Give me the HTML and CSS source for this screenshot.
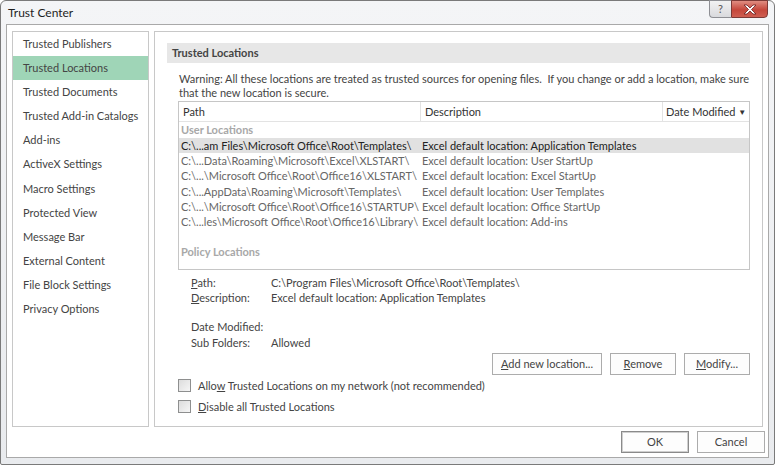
FILE: index.html
```html
<!DOCTYPE html>
<html lang="en">
<head>
    <meta charset="UTF-8">
    <title>Trust Center</title>
<link rel="stylesheet" href="styles.css">
</head>
<body>
    <div class="window">
        <div class="titlebar">
            <div class="title">Trust Center</div>
            <div class="caption">
                <div class="help">?</div>
                <div class="close">
                    <svg width="14" height="11" viewBox="0 0 14 11">
                        <path d="M1 1h3l3 3 3-3h3l-4.5 4.5L13 10h-3L7 7l-3 3H1l4.5-4.5z" fill="#fff" stroke="#6b1f1f" stroke-width="0.8"/>
                    </svg>
                </div>
            </div>
        </div>

        <div class="client">
            <div class="content">
                <div class="nav">
                    <div class="item">Trusted Publishers</div>
                    <div class="item active">Trusted Locations</div>
                    <div class="item">Trusted Documents</div>
                    <div class="item">Trusted Add-in Catalogs</div>
                    <div class="item">Add-ins</div>
                    <div class="item">ActiveX Settings</div>
                    <div class="item">Macro Settings</div>
                    <div class="item">Protected View</div>
                    <div class="item">Message Bar</div>
                    <div class="item">External Content</div>
                    <div class="item">File Block Settings</div>
                    <div class="item">Privacy Options</div>
                </div>

                <div class="panel">
                    <div class="heading">Trusted Locations</div>
                    <div class="warning">Warning: All these locations are treated as trusted sources for opening files.&nbsp; If you change or add a location, make sure that the new location is secure.</div>

                    <div class="list">
                        <div class="head">
                            <div class="col path">Path</div>
                            <div class="col desc">Description</div>
                            <div class="col date">Date Modified <span class="arrow">&#9660;</span></div>
                        </div>
                        <div class="group">User Locations</div>
                        <div class="row selected">
                            <div class="path">C:\...am Files\Microsoft Office\Root\Templates\</div>
                            <div class="desc">Excel default location: Application Templates</div>
                        </div>
                        <div class="row">
                            <div class="path">C:\...Data\Roaming\Microsoft\Excel\XLSTART\</div>
                            <div class="desc">Excel default location: User StartUp</div>
                        </div>
                        <div class="row">
                            <div class="path">C:\...\Microsoft Office\Root\Office16\XLSTART\</div>
                            <div class="desc">Excel default location: Excel StartUp</div>
                        </div>
                        <div class="row">
                            <div class="path">C:\...AppData\Roaming\Microsoft\Templates\</div>
                            <div class="desc">Excel default location: User Templates</div>
                        </div>
                        <div class="row">
                            <div class="path">C:\...\Microsoft Office\Root\Office16\STARTUP\</div>
                            <div class="desc">Excel default location: Office StartUp</div>
                        </div>
                        <div class="row">
                            <div class="path">C:\...les\Microsoft Office\Root\Office16\Library\</div>
                            <div class="desc">Excel default location: Add-ins</div>
                        </div>
                        <div class="group policy">Policy Locations</div>
                    </div>

                    <div class="details">
                        <div class="label"><u>P</u>ath:</div>
                        <div>C:\Program Files\Microsoft Office\Root\Templates\</div>
                        <div class="label"><u>D</u>escription:</div>
                        <div>Excel default location: Application Templates</div>
                        <div class="label blank">&nbsp;</div>
                        <div class="blank"></div>
                        <div class="label">Date Modified:</div>
                        <div></div>
                        <div class="label last">Sub Folders:</div>
                        <div class="last">Allowed</div>
                    </div>

                    <div class="actions">
                        <a href="#" class="btn wide"><u>A</u>dd new location...</a>
                        <a href="#" class="btn"><u>R</u>emove</a>
                        <a href="#" class="btn"><u>M</u>odify...</a>
                    </div>

                    <label class="check"><span class="box"></span><span>Allo<u>w</u> Trusted Locations on my network (not recommended)</span></label>
                    <label class="check"><span class="box"></span><span><u>D</u>isable all Trusted Locations</span></label>
                </div>
            </div>

            <div class="footer">
                <a href="#" class="btn default">OK</a>
                <a href="#" class="btn">Cancel</a>
            </div>
        </div>
    </div>
</body>
</html>
```

FILE: styles.css
```css
body {
margin: 0;
background: #fff;
font-family: Lato, "Open Sans", sans-serif;
font-size: 11px;
color: #444;
}

.window {
width: 775px;
height: 465px;
box-sizing: border-box;
border: solid 1px #7a7a7a;
border-radius: 6px 6px 2px 2px;
background: linear-gradient(#f4f5f7, #e9ebee);
display: flex;
flex-direction: column;
}

.titlebar {
height: 23px;
flex-shrink: 0;
display: flex;
justify-content: space-between;
}

.title {
padding: 4px 0 0 7px;
font-size: 12px;
color: #1e1e1e;
}

.caption {
display: flex;
margin-right: 6px;
margin-top: -1px;
}

.help {
width: 22px;
height: 18px;
box-sizing: border-box;
border: solid 1px #8e8f94;
border-right: none;
border-radius: 0 0 0 4px;
background: linear-gradient(#f2f2f2, #d9dadd);
text-align: center;
font-size: 11px;
line-height: 16px;
color: #555;
}

.close {
width: 37px;
height: 18px;
box-sizing: border-box;
border: solid 1px #7d3a36;
border-radius: 0 0 4px 0;
background: linear-gradient(#e08d81, #c5473b 55%, #cf5f52);
display: flex;
justify-content: center;
align-items: center;
}

.client {
flex: 1;
margin: 0 5px 6px 5px;
border: solid 1px #a9a9a9;
background: #fff;
display: flex;
flex-direction: column;
}

.content {
display: flex;
gap: 5px;
padding: 6px 5px 0 5px;
}

.nav {
width: 137px;
height: 396px;
box-sizing: border-box;
border: solid 1px #c8c8c8;
}

.item {
height: 24.1px;
line-height: 24px;
padding-left: 10px;
white-space: nowrap;
}

.item.active {
background: #9fd5b7;
}

.panel {
flex: 1;
height: 396px;
box-sizing: border-box;
border: solid 1px #c8c8c8;
padding: 11px 12px 0 12px;
}

.heading {
height: 20px;
line-height: 20px;
background: #e7e7e7;
padding-left: 5px;
font-weight: bold;
}

.warning {
margin: 9px 0 0 12px;
line-height: 13.5px;
}

.list {
margin: 2px 0 0 11px;
height: 167px;
border: solid 1px #c6c6c6;
}

.head {
display: flex;
height: 19px;
line-height: 19px;
border-bottom: solid 1px #e3e3e3;
color: #333;
white-space: nowrap;
}

.col {
padding-left: 4px;
border-right: solid 1px #e3e3e3;
}

.path {
width: 237px;
}

.desc {
width: 237px;
}

.col.date {
flex: 1;
border-right: none;
padding-left: 3px;
}

.arrow {
font-size: 8px;
vertical-align: 1px;
}

.group {
height: 16px;
line-height: 16px;
padding-left: 2px;
color: #a8a8a8;
font-weight: bold;
}

.group.policy {
margin-top: 15px;
}

.row {
display: flex;
height: 15.2px;
line-height: 15px;
padding-left: 2px;
color: #666;
white-space: nowrap;
}

.row .path {
width: 241px;
}

.row.selected {
background: #e1e1e1;
color: #222;
}

.details {
display: grid;
grid-template-columns: 80px 1fr;
margin: 5px 0 0 24px;
line-height: 15px;
}

.details .blank {
height: 14px;
}

.details .last {
margin-top: 1px;
}

.actions {
display: flex;
justify-content: flex-end;
gap: 8px;
margin-top: 3px;
}

.btn {
display: block;
width: 66px;
height: 22px;
box-sizing: border-box;
border: solid 1px #acacac;
background: #fdfdfd;
text-align: center;
line-height: 20px;
color: #444;
text-decoration: none;
}

.btn.wide {
width: 110px;
}

.check {
display: flex;
align-items: center;
margin: 2px 0 0 11px;
height: 16px;
}

.check + .check {
margin-top: 5px;
}

.box {
width: 11px;
height: 11px;
border: solid 1px #8e8f8f;
background: linear-gradient(135deg, #dcdcdc, #f6f6f6);
margin-right: 7px;
}

.footer {
display: flex;
justify-content: flex-end;
gap: 8px;
padding: 4px 3px 0 0;
}

.footer .btn {
width: 68px;
}

.btn.default {
border: solid 1px #8a8a8a;
box-shadow: inset 0 0 0 1px #cfcfcf;
}
```
